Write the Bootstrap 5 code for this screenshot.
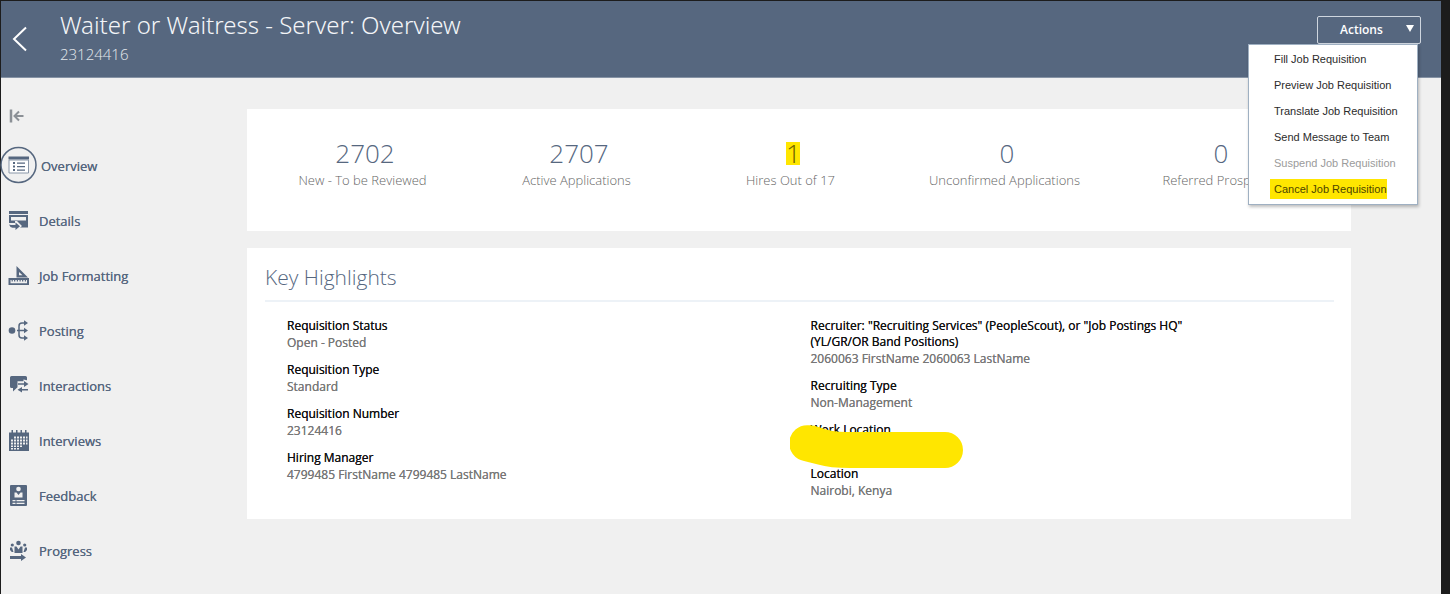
<!DOCTYPE html>
<html lang="en">
<head>
<meta charset="utf-8">
<meta name="viewport" content="width=device-width, initial-scale=1">
<title>Waiter or Waitress - Server: Overview</title>
<link rel="stylesheet" href="https://cdn.jsdelivr.net/npm/bootstrap@5.3.0/dist/css/bootstrap.min.css">
<style>
  :root { --slate: #56677f; --mark: #ffe600; }
  body { background: #1c1c1c; font-family: "Open Sans", "Noto Sans", sans-serif; font-size: 12px; }
  .app-frame { background: #f0f0f0; margin: 1px 9px 0 1px; }
  .app-header { background: var(--slate); height: 77px; padding-right: 20px; border-bottom: 1px solid #8693a5; }
  .back-link { width: 59px; padding-left: 11px; }
  .title-block { padding-top: 6px; }
  .page-title { font: 300 24px/35px "Noto Sans", "Open Sans", sans-serif; color: #f3f5f8; }
  .page-id { font-size: 15px; line-height: 24px; font-weight: 300; color: #e3e7ec; }

  .actions { padding-top: 15px; }
  .actions-btn { width: 104px; height: 28px; border: 1px solid #cfd6df; border-radius: 2px; background: transparent; color: #fff; font-size: 12px; font-weight: 600; padding: 0 5px 0 22px; }
  .actions-menu { right: 3px; top: 100%; width: 170px; padding: 1px 0 2px; background: #fff; border: 1px solid #9fb0c2; border-radius: 0; box-shadow: 1px 2px 3px rgba(0,0,0,.25); z-index: 10; }
  .actions-menu button { height: 26px; width: 100%; padding: 0 0 0 21px; border: 0; background: none; text-align: left; font: 11px/20px "Liberation Sans", Arial, sans-serif; color: #2b2b2b; }
  .actions-menu button:disabled { color: #9b9b9b; }
  .actions-menu span { display: inline-block; padding: 0 0 0 4px; white-space: nowrap; }
  .actions-menu .is-marked { background: var(--mark); color: #4c4400; }

  .side-nav { width: 246px; padding-top: 31px; }
  .collapse-btn { height: 14px; margin: 0 0 16px 8px; }
  .side-link { height: 55px; padding-left: 7px; gap: 10px; color: var(--slate); font-size: 13px; text-decoration: none; }
  .side-link span, .fields { text-shadow: 0 0 0 currentColor; }
  .side-link svg { width: 21px; height: 22px; fill: var(--slate); overflow: visible; }
  .side-link.current { padding-left: 0; gap: 4px; }
  .side-link.current svg { width: 36px; height: 38px; }

  .content { padding: 31px 90px 60px 0; }
  .panel { background: #fff; }
  .stats { height: 122px; padding: 27px 23px 0 11px; margin-bottom: 17px; }
  .stat-value { font-size: 26px; line-height: 34px; font-weight: 300; color: var(--slate); }
  .stat-value mark { display: inline-block; padding: 0; line-height: 23px; width: 14px; background: var(--mark); color: #6b6100; }
  .stat-label { font-size: 13px; line-height: 20px; font-weight: 300; color: #666; padding-right: 5px; white-space: nowrap; }
  .highlights { padding: 11px 17px 9px 18px; }
  .highlights h2 { font-size: 21px; line-height: 36px; font-weight: 300; color: var(--slate); padding-bottom: 5px; border-bottom: 2px solid #edf2f7; margin-bottom: 16px; }
  .fields { padding-left: 22px; }
  .fields dl { margin: 0; padding-right: 120px; }
  .fields dt { line-height: 16px; font-weight: 400; color: #111; }
  .fields dd { line-height: 17px; margin-bottom: 11px; color: #777; min-height: 17px; }
  .redaction { left: -21px; top: 3px; width: 173px; height: 43px; }
</style>
</head>
<body>
<div class="app-frame min-vh-100">
  <header class="app-header d-flex">
    <a class="back-link d-flex align-items-center flex-shrink-0" href="#" aria-label="Back">
      <svg width="16" height="26" viewBox="0 0 16 26" fill="none" stroke="#fff" stroke-width="2"><path d="M14 1.500L2 13l12 11.500"/></svg>
    </a>
    <div class="title-block flex-grow-1">
      <h1 class="page-title m-0">Waiter or Waitress - Server: Overview</h1>
      <div class="page-id">23124416</div>
    </div>
    <div class="actions">
      <div class="position-relative">
        <button class="actions-btn d-flex justify-content-between align-items-center" type="button" aria-expanded="true">
          <span>Actions</span>
          <svg class="mb-1" width="10" height="7" viewBox="0 0 10 7" fill="#fff"><path d="M1 0h8L5 7z"/></svg>
        </button>
        <div class="actions-menu position-absolute">
          <button type="button"><span>Fill Job Requisition</span></button>
          <button type="button"><span>Preview Job Requisition</span></button>
          <button type="button"><span>Translate Job Requisition</span></button>
          <button type="button"><span>Send Message to Team</span></button>
          <button type="button" disabled><span>Suspend Job Requisition</span></button>
          <button type="button"><span class="is-marked">Cancel Job Requisition</span></button>
        </div>
      </div>
    </div>
  </header>

  <div class="d-flex">
    <nav class="side-nav flex-shrink-0" aria-label="Requisition">
      <button class="collapse-btn btn p-0 border-0 d-flex" type="button" aria-label="Collapse panel">
        <svg width="15" height="14" viewBox="0 0 15 14" fill="none" stroke="#8b9096"><path stroke-width="2.500" d="M2 .5v13"/><path stroke-width="2" d="M14.500 7H6M10 2.500L5.500 7l4.500 4.500"/></svg>
      </button>
      <a class="side-link current d-flex align-items-center" href="#" aria-current="page">
        <svg viewBox="0 1 36 38"><circle cx="17.500" cy="18" r="17.500" fill="none" stroke="#56677f" stroke-width="1.500"/><path d="M7.500 9.500h20.500v3H7.500z"/><path fill="#fff" stroke="#8a97a8" d="M8 13h19.500v13H8z"/><path d="M12 15h2v2h-2zM16 15.500h8v1.300h-8zM12 18.500h2v2h-2zM16 19h8v1.300h-8zM12 22h2v2h-2zM16 22.500h8v1.300h-8z"/></svg>
        <span>Overview</span>
      </a>
      <a class="side-link d-flex align-items-center" href="#">
        <svg viewBox="0 1 21 22"><path d="M1 1h19v3H1zM1 5h19v12.500H1z"/><path fill="#f0f0f0" d="M3 7h15v3.500H3zM1 13h6v-2h2l5 5-5 4.500v-1.500H1z"/><path d="M1 14.500l2 .5h4.500v-2.500L12 16.200 7.500 20v-2.300H4.500Q2 17.500 1 14.500zM1 11.500h5V13H1z"/></svg>
        <span>Details</span>
      </a>
      <a class="side-link d-flex align-items-center" href="#">
        <svg viewBox="0 1 21 22"><path fill-rule="evenodd" d="M8.500 1L20 12.500H8.500zM11 7v3.200h3.500zM.5 13h20.500v7H.5zM2.500 15v3.200h16.500V15h-1v1.500h-1.200V15h-1.500v1.500H14V15h-1.300v1.500h-1.200V15H10v1.500H8.800V15H7.300v1.500H6V15H4.800v1.500H3.600V15z"/></svg>
        <span>Job Formatting</span>
      </a>
      <a class="side-link d-flex align-items-center" href="#">
        <svg viewBox="0 1 21 22"><circle cx="4" cy="10.500" r="3.300"/><path fill="none" stroke="#56677f" stroke-width="1.500" d="M9 10.500h8M17 3h-3q-3 0-3 3v9q0 3 3 3h3"/><path d="M16 .3l4 2.700-4 2.700zM16 7.800l4 2.700-4 2.700zM16 15.300l4 2.700-4 2.700z"/></svg>
        <span>Posting</span>
      </a>
      <a class="side-link d-flex align-items-center" href="#">
        <svg viewBox="0 1 21 22"><path d="M3.500 1h14Q19 1 19 2.500v2.700l-3.500-.7v1.800H9.500v6L5 16.500V13H3.500Q2 13 2 11.500v-9Q2 1 3.500 1z"/><path d="M10 8.300h6V6l4.500 3L16 12V9.800h-6zM20 14v1.500h-6V17.500l-4.500-2.700L14 12v2z"/></svg>
        <span>Interactions</span>
      </a>
      <a class="side-link d-flex align-items-center" href="#">
        <svg viewBox="0 1 21 22"><path d="M1 2.500h2.500V0H5v2.500h3V0h1.500v2.500h3V0H14v2.500h3V0h1.500v2.500H21V21H1z"/><path fill="#f0f0f0" d="M6 6.500h2v2H6zM9 6.500h2v2H9zM12 6.500h2v2h-2zM15 6.500h2v2h-2zM18 6.500h1.500v2H18zM3 9.500h2v2H3zM6 9.500h2v2H6zM9 9.500h2v2H9zM12 9.500h2v2h-2zM15 9.500h2v2h-2zM18 9.500h1.500v2H18zM3 12.500h2v2H3zM6 12.500h2v2H6zM9 12.500h2v2H9zM12 12.500h2v2h-2zM15 12.500h2v2h-2zM18 12.500h1.500v2H18zM3 15.500h2v1.500H3zM6 15.500h2v1.500H6zM9 15.500h2v1.500H9zM12 15.500h2v1.500h-2zM3 18h2v1.500H3zM6 18h2v1.500H6zM9 18h2v1.500H9z"/></svg>
        <span>Interviews</span>
      </a>
      <a class="side-link d-flex align-items-center" href="#">
        <svg viewBox="0 1 21 22"><rect x="2" width="17" height="21" rx="1"/><circle cx="10.500" cy="4" r="2.300" fill="#f0f0f0"/><path fill="#f0f0f0" d="M6.500 12.500v-5h2l2 2.500 2-2.500h2v5zM4.500 15h3v1.300h-3zM8.500 15h8v1.300h-8zM4.500 17.800h3v1.300h-3zM8.500 17.800h8v1.300h-8z"/></svg>
        <span>Feedback</span>
      </a>
      <a class="side-link d-flex align-items-center" href="#">
        <svg viewBox="0 1 21 22"><circle cx="10.500" cy="3" r="2.300"/><circle cx="4.300" cy="5" r="1.600"/><circle cx="16.700" cy="5" r="1.600"/><path d="M6.500 6.500h2l2 3 2-3h2V13h-8zM2 7.500h2L5.500 12H3.800L2 10zM19 7.500h-2L15.500 12h1.700L19 10zM2 16h11v-2l5 3.500-5 3.500v-2H2z"/></svg>
        <span>Progress</span>
      </a>
    </nav>

    <main class="content flex-grow-1">
      <section class="panel stats">
        <div class="row g-0 text-center">
          <div class="col"><div class="stat-value">2702</div><div class="stat-label">New - To be Reviewed</div></div>
          <div class="col"><div class="stat-value">2707</div><div class="stat-label">Active Applications</div></div>
          <div class="col"><div class="stat-value"><mark>1</mark></div><div class="stat-label">Hires Out of 17</div></div>
          <div class="col"><div class="stat-value">0</div><div class="stat-label">Unconfirmed Applications</div></div>
          <div class="col"><div class="stat-value">0</div><div class="stat-label">Referred Prospects</div></div>
        </div>
      </section>

      <section class="panel highlights">
        <h2>Key Highlights</h2>
        <div class="fields row g-0">
          <dl class="col-6">
            <dt>Requisition Status</dt><dd>Open - Posted</dd>
            <dt>Requisition Type</dt><dd>Standard</dd>
            <dt>Requisition Number</dt><dd>23124416</dd>
            <dt>Hiring Manager</dt><dd>4799485 FirstName 4799485 LastName</dd>
          </dl>
          <dl class="col-6">
            <dt>Recruiter: "Recruiting Services" (PeopleScout), or "Job Postings HQ" (YL/GR/OR Band Positions)</dt><dd>2060063 FirstName 2060063 LastName</dd>
            <dt>Recruiting Type</dt><dd>Non-Management</dd>
            <dt class="position-relative">Work Location
              <svg class="redaction position-absolute" viewBox="0 0 173 43" fill="#ffe600" aria-hidden="true"><path d="M18 .3Q24 0 30 2.500 42 7 56 7H155A18 18 0 0 1 155 43H60Q40 43 28 39.500L14 36A18 18 0 0 1 18 .3z"/></svg>
            </dt><dd></dd>
            <dt>Location</dt><dd>Nairobi, Kenya</dd>
          </dl>
        </div>
      </section>
    </main>
  </div>
</div>
<script src="https://cdn.jsdelivr.net/npm/bootstrap@5.3.0/dist/js/bootstrap.bundle.min.js"></script>
</body>
</html>
